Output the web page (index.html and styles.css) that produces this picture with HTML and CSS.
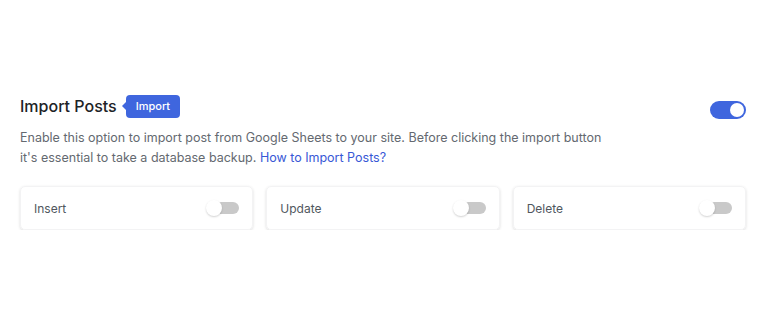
FILE: index.html
```html
<!DOCTYPE html>
<html lang="en">
<head>
    <meta charset="UTF-8">
    <meta name="viewport" content="width=device-width, initial-scale=1.0">
    <title>Import Posts</title>
    <link rel="stylesheet" href="styles.css">
</head>
<body>
    <section class="setting">
        <div class="setting-head">
            <div class="setting-title">
                <h2>Import Posts</h2>
                <span class="badge">Import</span>
            </div>
            <label class="switch switch-on">
                <span class="switch-knob"></span>
            </label>
        </div>
        <p class="setting-desc">Enable this option to import post from Google Sheets to your site. Before clicking the import button it's essential to take a database backup. <a href="#">How to Import Posts?</a></p>
        <div class="options">
            <div class="option-card">
                <span>Insert</span>
                <label class="switch-small"><span class="switch-small-knob"></span></label>
            </div>
            <div class="option-card">
                <span>Update</span>
                <label class="switch-small"><span class="switch-small-knob"></span></label>
            </div>
            <div class="option-card">
                <span>Delete</span>
                <label class="switch-small"><span class="switch-small-knob"></span></label>
            </div>
        </div>
    </section>
</body>
</html>
```

FILE: styles.css
```css
body {
    margin: 0;
    padding: 0;
    background: #fff;
    font-family: Inter, "Noto Sans", sans-serif;
}

.setting {
    padding: 94px 22px 0 20px;
}

.setting-head {
    display: flex;
    justify-content: space-between;
    align-items: center;
    height: 24px;
}

.setting-title {
    display: flex;
    align-items: center;
}

.setting-title h2 {
    margin: 0;
    font-size: 16px;
    line-height: 24px;
    font-weight: 500;
    color: #1d2327;
}

.badge {
    position: relative;
    margin-left: 9px;
    background: #3f66de;
    color: #fff;
    font-size: 11px;
    font-weight: 500;
    line-height: 23px;
    padding: 0 10px;
    border-radius: 4px;
}

.badge::before {
    content: "";
    position: absolute;
    left: -4px;
    top: 50%;
    margin-top: -4px;
    border-style: solid;
    border-width: 4px 4px 4px 0;
    border-color: transparent #3f66de transparent transparent;
}

.switch {
    position: relative;
    display: block;
    width: 36px;
    height: 18px;
    margin-top: 7px;
    border-radius: 9px;
    background: #3f66de;
}

.switch-knob {
    position: absolute;
    top: 2px;
    right: 2px;
    width: 14px;
    height: 14px;
    border-radius: 50%;
    background: #fff;
}

.setting-desc {
    margin: 10px 0 0;
    max-width: 590px;
    font-size: 12.5px;
    line-height: 20px;
    color: #646970;
}

.setting-desc a {
    color: #3858d6;
    text-decoration: none;
}

.options {
    display: grid;
    grid-template-columns: repeat(3, 1fr);
    gap: 13px;
    margin-top: 18px;
}

.option-card {
    display: flex;
    justify-content: space-between;
    align-items: center;
    height: 44px;
    padding: 0 13px;
    box-sizing: border-box;
    border-radius: 5px;
    border: 1px solid #f3f3f4;
    box-shadow: 0 1px 3px rgba(0, 0, 0, 0.14);
    font-size: 12px;
    color: #50575e;
}

.switch-small {
    position: relative;
    display: block;
    width: 30px;
    height: 12px;
    border-radius: 6px;
    background: #c9c9c9;
}

.switch-small-knob {
    position: absolute;
    left: -3px;
    top: -2px;
    width: 16px;
    height: 16px;
    border-radius: 50%;
    background: #fff;
    box-shadow: 0 1px 2px rgba(0, 0, 0, 0.18);
}
```
